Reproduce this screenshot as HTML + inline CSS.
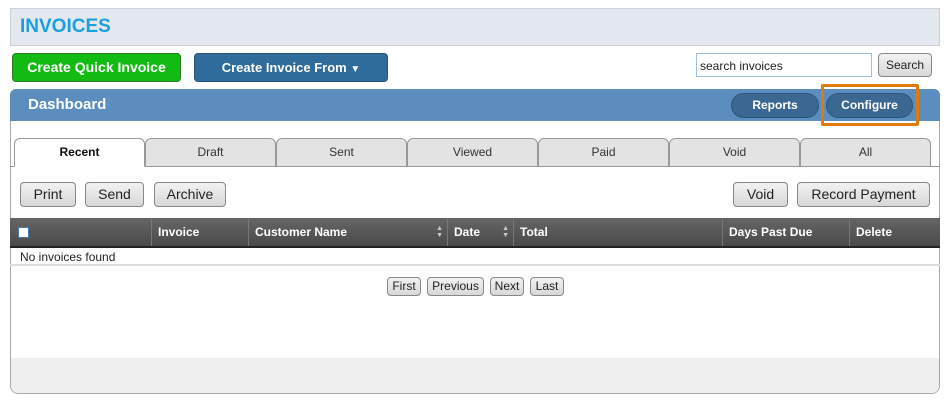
<!DOCTYPE html>
<html><head><style>
*{box-sizing:border-box;margin:0;padding:0}
body{width:950px;height:404px;background:#fff;font-family:"Liberation Sans",Arial,sans-serif;position:relative;overflow:hidden}
.a{position:absolute}
.hdr{left:10px;top:8px;width:930px;height:38px;background:#e3e7ee;border:1px solid #ccd0d6}
.hdr span{position:absolute;left:9px;top:7px;color:#1b9fe0;font-weight:bold;font-size:19px}
.btn1{left:12px;top:53px;width:169px;height:29px;background:#12bb12;border:1px solid #2a7a2a;border-radius:4px;color:#fff;font-weight:bold;font-size:14px;text-align:center;line-height:27px}
.btn2{left:194px;top:53px;width:194px;height:29px;background:#2f6c9c;border:1px solid #24557d;border-radius:4px;color:#fff;font-weight:bold;font-size:13px;text-align:center;line-height:27px}
.srch{left:696px;top:53px;width:176px;height:24px;border:1px solid #9ec0dd;font-size:12px;padding:5px 3px;color:#222}
.gb{background:linear-gradient(#f2f2f2,#d8d8d8);border:1px solid #888;border-radius:4px;color:#222;text-align:center;font-size:14px}
.dash{left:10px;top:89px;width:930px;height:33px;background:#5b8dbf;border-radius:6px 6px 0 0}
.dash span{position:absolute;left:18px;top:7px;color:#fff;font-weight:bold;font-size:15px}
.pill{top:93px;height:25px;background:#3b6892;border:1px solid #2d5578;border-radius:13px;color:#fff;font-weight:bold;font-size:12px;text-align:center;line-height:23px}
.panel{left:10px;top:121px;width:930px;height:273px;border:1px solid #aaa;border-top:none;border-radius:0 0 8px 8px;background:#fff;overflow:hidden}
.foot{left:0;top:237px;width:930px;height:40px;background:#efefef}
.tab{top:138px;height:29px;width:131px;background:#e3e3e3;border:1px solid #999;border-radius:6px 6px 0 0;font-size:12px;text-align:center;line-height:26px;color:#333}
.th{top:218px;height:30px;background:linear-gradient(#666,#4a4a4a);color:#fff;font-weight:bold;font-size:12px;line-height:29px;border-bottom:2px solid #222}
.col{position:absolute;top:0;height:28px;border-left:1px solid #777;padding-left:6px}
.sa{position:absolute;right:4px;top:7px;font-size:7px;line-height:7px;color:#ccc}
.pg{top:277px;height:19px;font-size:12px;line-height:17px}
</style></head><body>
<div class="a hdr"><span>INVOICES</span></div>
<div class="a btn1">Create Quick Invoice</div>
<div class="a btn2">Create Invoice From <span style="font-size:10px">&#9660;</span></div>
<div class="a srch">search invoices</div>
<div class="a gb" style="left:878px;top:53px;width:54px;height:24px;font-size:12px;line-height:22px">Search</div>
<div class="a dash"><span>Dashboard</span></div>
<div class="a pill" style="left:731px;width:88px">Reports</div>
<div class="a pill" style="left:826px;width:87px">Configure</div>
<div class="a panel"><div class="a foot"></div></div>
<div class="a" style="left:821px;top:84px;width:98px;height:42px;border:3px solid #e07b0a;border-radius:2px"></div>
<div class="a" style="left:10px;top:166px;width:930px;height:1px;background:#999"></div>
<div class="a tab" style="left:14px;background:#fff;border-bottom-color:#fff;font-weight:bold;color:#111">Recent</div>
<div class="a tab" style="left:145px">Draft</div>
<div class="a tab" style="left:276px">Sent</div>
<div class="a tab" style="left:407px">Viewed</div>
<div class="a tab" style="left:538px">Paid</div>
<div class="a tab" style="left:669px">Void</div>
<div class="a tab" style="left:800px">All</div>
<div class="a gb" style="left:20px;top:182px;width:56px;height:25px;line-height:23px">Print</div>
<div class="a gb" style="left:85px;top:182px;width:59px;height:25px;line-height:23px">Send</div>
<div class="a gb" style="left:154px;top:182px;width:72px;height:25px;line-height:23px">Archive</div>
<div class="a gb" style="left:733px;top:182px;width:55px;height:25px;line-height:23px">Void</div>
<div class="a gb" style="left:797px;top:182px;width:133px;height:25px;line-height:23px">Record Payment</div>
<div class="a th" style="left:10px;width:930px">
<div class="a" style="left:8px;top:9px;width:11px;height:11px;background:#fff;border:1px solid #4a7ab0"></div>
<div class="col" style="left:141px">Invoice</div>
<div class="col" style="left:238px;width:199px">Customer Name<span class="sa">&#9650;<br>&#9660;</span></div>
<div class="col" style="left:437px;width:66px">Date<span class="sa">&#9650;<br>&#9660;</span></div>
<div class="col" style="left:503px">Total</div>
<div class="col" style="left:712px">Days Past Due</div>
<div class="col" style="left:839px">Delete</div>
</div>
<div class="a" style="left:10px;top:248px;width:930px;height:18px;border-bottom:2px solid #ddd;font-size:12px;padding:2px 10px;color:#222">No invoices found</div>
<div class="a gb pg" style="left:387px;width:34px">First</div>
<div class="a gb pg" style="left:427px;width:57px">Previous</div>
<div class="a gb pg" style="left:490px;width:34px">Next</div>
<div class="a gb pg" style="left:530px;width:34px">Last</div>
</body></html>
